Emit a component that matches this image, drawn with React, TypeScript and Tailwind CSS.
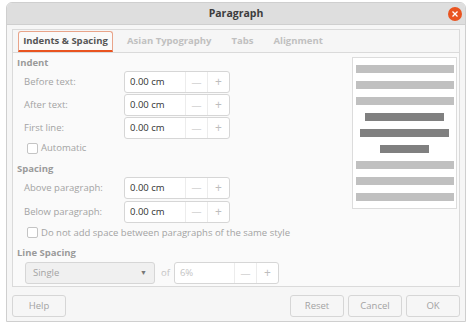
const font = { fontFamily: '"Open Sans", "Noto Sans", sans-serif' };

function Spin({ value, muted = false, w = "w-[106px]" }: { value: string; muted?: boolean; w?: string }) {
  return (
    <div className={`flex h-[22px] ${w} rounded-[3px] border border-[#d6d6d6] bg-white`}>
      <div className={`flex flex-1 items-center pl-[5px] text-[9.5px] ${muted ? "text-[#c4c4c4]" : "text-[#333]"}`}>{value}</div>
      <div className="flex w-[22px] items-center justify-center border-l border-[#ececec] text-[10px] text-[#d8d8d8]">—</div>
      <div className="flex w-[22px] items-center justify-center border-l border-[#ececec] text-[12px] text-[#bdbdbd]">+</div>
    </div>
  );
}

function Row({ label, top }: { label: string; top: string }) {
  return (
    <div className={`flex items-center ${top}`}>
      <div className="w-[107px] pl-[7px] text-[9.5px] text-[#a3a3a3]">{label}</div>
      <Spin value="0.00 cm" />
    </div>
  );
}

function Check({ label, top }: { label: string; top: string }) {
  return (
    <div className={`flex items-center gap-[3px] pl-[10px] ${top}`}>
      <div className="h-[11px] w-[11px] rounded-[2px] border border-[#c4c4c4] bg-white" />
      <span className="text-[9.5px] text-[#a3a3a3]">{label}</span>
    </div>
  );
}

function Btn({ label }: { label: string }) {
  return (
    <div className="flex h-[22px] w-[54px] items-center justify-center rounded-[3px] border border-[#d6d6d6] bg-[#f6f6f6] text-[9.5px] text-[#a3a3a3]">
      {label}
    </div>
  );
}

const bars = [
  { w: "w-[98px]", dark: false },
  { w: "w-[98px]", dark: false },
  { w: "w-[98px]", dark: false },
  { w: "w-[79px]", dark: true },
  { w: "w-[89px]", dark: true },
  { w: "w-[49px]", dark: true },
  { w: "w-[98px]", dark: false },
  { w: "w-[98px]", dark: false },
  { w: "w-[98px]", dark: false },
];

export default function App() {
  return (
    <div className="h-[328px] w-[474px] bg-white pl-[6px] pt-[2px]" style={font}>
      <div className="flex h-[320px] w-[460px] flex-col overflow-hidden rounded-t-[6px] border border-[#cfcfcf] bg-[#f6f6f6]">
        <div className="relative flex h-[22px] items-center justify-center border-b border-[#cfcfcf] bg-[#dedede]">
          <span className="text-[10.5px] font-bold text-[#3c3c3c]">Paragraph</span>
          <div className="absolute right-[3px] top-[4px] flex h-[14px] w-[14px] items-center justify-center rounded-full bg-[#e95420]">
            <svg width="6" height="6" viewBox="0 0 6 6">
              <path d="M0.5 0.5 L5.5 5.5 M5.5 0.5 L0.5 5.5" stroke="white" strokeWidth="1.3" />
            </svg>
          </div>
        </div>
        <div className="flex flex-1 flex-col px-[5px] pt-[4px]">
          <div className="flex flex-col border border-[#dadada] bg-[#fafafa]">
            <div className="flex h-[23px] items-stretch border-b border-[#dadada] bg-[#f6f6f6] pl-[5px] pt-[1px]">
              <div className="flex w-[95px] items-center justify-center rounded-t-[3px] border-x border-t border-[#e9a48a] border-b-2 border-b-[#e95420] bg-[#fafafa] text-[9.5px] font-bold text-[#555]">
                Indents &amp; Spacing
              </div>
              <div className="flex items-center pl-[14px] text-[9.5px] font-bold text-[#c0c0c0]">Asian Typography</div>
              <div className="flex items-center pl-[20px] text-[9.5px] font-bold text-[#c0c0c0]">Tabs</div>
              <div className="flex items-center pl-[20px] text-[9.5px] font-bold text-[#c0c0c0]">Alignment</div>
            </div>
            <div className="flex h-[233px] pl-[4px] pr-[2px]">
              <div className="flex flex-1 flex-col">
                <div className="pt-[3px] text-[9.5px] font-bold text-[#9a9a9a]">Indent</div>
                <Row label="Before text:" top="mt-[1px]" />
                <Row label="After text:" top="mt-[1px]" />
                <Row label="First line:" top="mt-[1px]" />
                <Check label="Automatic" top="mt-[2px]" />
                <div className="mt-[6px] text-[9.5px] font-bold text-[#9a9a9a]">Spacing</div>
                <Row label="Above paragraph:" top="mt-[1px]" />
                <Row label="Below paragraph:" top="mt-[2px]" />
                <Check label="Do not add space between paragraphs of the same style" top="mt-[3px]" />
                <div className="mt-[6px] text-[9.5px] font-bold text-[#9a9a9a]">Line Spacing</div>
                <div className="mt-[2px] flex items-center pl-[8px]">
                  <div className="flex h-[22px] w-[130px] items-center justify-between rounded-[3px] border border-[#d6d6d6] bg-[#f0f0f0] px-[7px] text-[9.5px] text-[#a3a3a3]">
                    <span>Single</span>
                    <span className="text-[7px] text-[#777]">▼</span>
                  </div>
                  <span className="pl-[6px] pr-[4px] text-[9.5px] text-[#c4c4c4]">of</span>
                  <Spin value="6%" muted w="w-[105px]" />
                </div>
              </div>
              <div className="mt-[4px] flex h-[152px] w-[105px] flex-col items-center gap-[8px] border border-[#dcdcdc] bg-white pt-[7px]">
                {bars.map((b, i) => (
                  <div key={i} className={`h-[8px] ${b.w} ${b.dark ? "bg-[#808080]" : "bg-[#c0c0c0]"}`} />
                ))}
              </div>
            </div>
          </div>
          <div className="mt-[8px] flex gap-[4px]">
            <Btn label="Help" />
            <div className="flex-1" />
            <Btn label="Reset" />
            <Btn label="Cancel" />
            <Btn label="OK" />
          </div>
        </div>
      </div>
    </div>
  );
}
